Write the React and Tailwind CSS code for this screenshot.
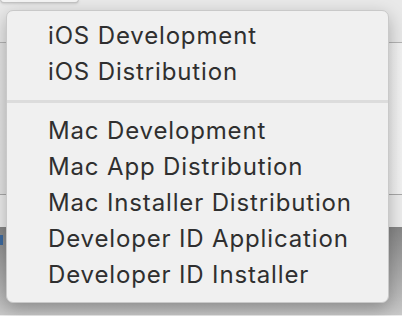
import React from 'react';

const groups = [
    ['iOS Development', 'iOS Distribution'],
    ['Mac Development', 'Mac App Distribution', 'Mac Installer Distribution', 'Developer ID Application', 'Developer ID Installer'],
];

const App = () => {
    return (
        <div className="relative w-[402px] h-[316px] overflow-hidden bg-[#ececec]" style={{ fontFamily: 'Inter, "Liberation Sans", sans-serif' }}>
            {/* window behind the menu */}
            <div className="h-[44px] bg-[#e9e9e9] border-b border-[#b4b4b4]">
                <div className="w-[79px] h-[4px] -mt-px rounded-b-[5px] bg-[#f4f4f4] border border-[#c4c4c4] shadow-sm" />
            </div>
            <div className="h-[152px] bg-gradient-to-r from-[#e4e4e4] to-[#f2f2f2] border-b border-[#a9a9a9]" />
            <div className="h-[32px] bg-[#ededed] flex items-end">
                <div className="w-[3px] h-[10px] bg-[#3d6aa0] mb-[-18px]" />
            </div>
            <div className="h-[88px] bg-gradient-to-b from-[#878787] to-[#c9c9c9]" />

            {/* popup menu */}
            <div className="absolute left-[6px] top-[10px] w-[383px] h-[293px] rounded-[7px] bg-[#f0f0f0] border border-[#c9c9c9] shadow-[0_6px_18px_rgba(0,0,0,0.28)] pt-[7px] text-[#2f2f2f]">
                {groups.map((items, gi) => (
                    <div key={gi}>
                        {gi > 0 && <div className="h-[3px] bg-[#dcdcdc] my-[10px]" />}
                        {items.map(label => (
                            <div key={label} className="h-[36px] leading-[36px] pl-[41px] text-[24px] tracking-[0.85px] whitespace-nowrap">
                                {label}
                            </div>
                        ))}
                    </div>
                ))}
            </div>
        </div>
    );
};

export default App;
